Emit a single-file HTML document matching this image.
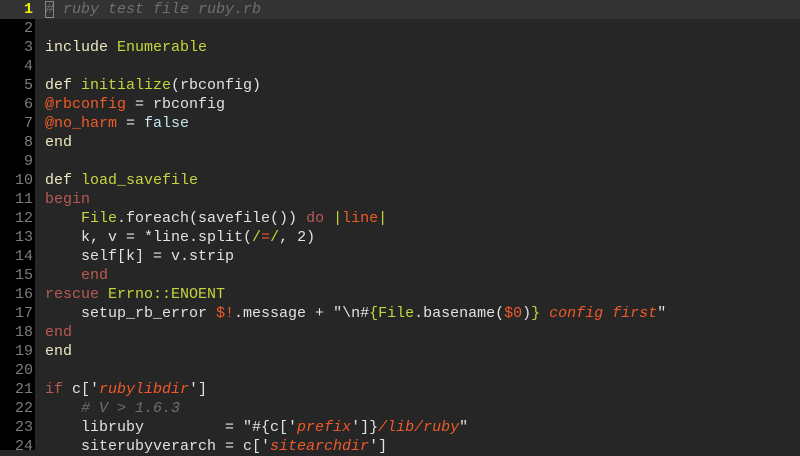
<!DOCTYPE html>
<html><head><style>
html,body{margin:0;padding:0;background:#262626;width:800px;height:450px;overflow:hidden}
.g{position:absolute;left:0;top:0;width:35px;height:450px;background:#000}
.c{position:absolute;top:0;left:0;width:800px;font:15px/19px "Liberation Mono",monospace;color:#e2e2e2}
.l{height:19px;position:relative;white-space:pre}
.n{display:inline-block;width:33px;padding-right:2px;text-align:right;color:#7c7c7c;margin-right:10px}
.cur{background:#333}
.cur .n{color:#f0f000;font-weight:bold}
.k{color:#ece8c0}.f{color:#c6d63c}.iv{color:#f05a28}.b{color:#b85a52}.cy{color:#c6e6f0}
.cm{color:#6f6f6f;font-style:italic}.s{color:#f05a28;font-style:italic}.rx{color:#f05a28}
.cu{outline:1px solid #888;outline-offset:-1px}
</style></head><body>
<div class="g"></div>
<div class="c"><div class="l cur"><span class="n">1</span><span class="cm"><span class="cu">#</span> ruby test file ruby.rb</span></div><div class="l"><span class="n">2</span></div><div class="l"><span class="n">3</span><span class="k">include</span> <span class="f">Enumerable</span></div><div class="l"><span class="n">4</span></div><div class="l"><span class="n">5</span><span class="k">def</span> <span class="f">initialize</span>(rbconfig)</div><div class="l"><span class="n">6</span><span class="iv">@rbconfig</span> = rbconfig</div><div class="l"><span class="n">7</span><span class="iv">@no_harm</span> = <span class="cy">false</span></div><div class="l"><span class="n">8</span><span class="k">end</span></div><div class="l"><span class="n">9</span></div><div class="l"><span class="n">10</span><span class="k">def</span> <span class="f">load_savefile</span></div><div class="l"><span class="n">11</span><span class="b">begin</span></div><div class="l"><span class="n">12</span>    <span class="f">File</span>.foreach(savefile()) <span class="b">do</span> <span class="f">|</span><span class="rx">line</span><span class="f">|</span></div><div class="l"><span class="n">13</span>    k, v = *line.split(<span class="f">/</span><span class="rx">=</span><span class="f">/</span>, 2)</div><div class="l"><span class="n">14</span>    self[k] = v.strip</div><div class="l"><span class="n">15</span>    <span class="b">end</span></div><div class="l"><span class="n">16</span><span class="b">rescue</span> <span class="f">Errno::ENOENT</span></div><div class="l"><span class="n">17</span>    setup_rb_error <span class="rx">$!</span>.message + "\n#<span class="f">{File</span>.basename(<span class="rx">$0</span>)<span class="f">}</span><span class="s"> config first</span>"</div><div class="l"><span class="n">18</span><span class="b">end</span></div><div class="l"><span class="n">19</span><span class="k">end</span></div><div class="l"><span class="n">20</span></div><div class="l"><span class="n">21</span><span class="b">if</span> c['<span class="s">rubylibdir</span>']</div><div class="l"><span class="n">22</span>    <span class="cm"># V &gt; 1.6.3</span></div><div class="l"><span class="n">23</span>    libruby         = "#{c['<span class="s">prefix</span>']}<span class="s">/lib/ruby</span>"</div><div class="l"><span class="n">24</span>    siterubyverarch = c['<span class="s">sitearchdir</span>']</div></div>
</body></html>
